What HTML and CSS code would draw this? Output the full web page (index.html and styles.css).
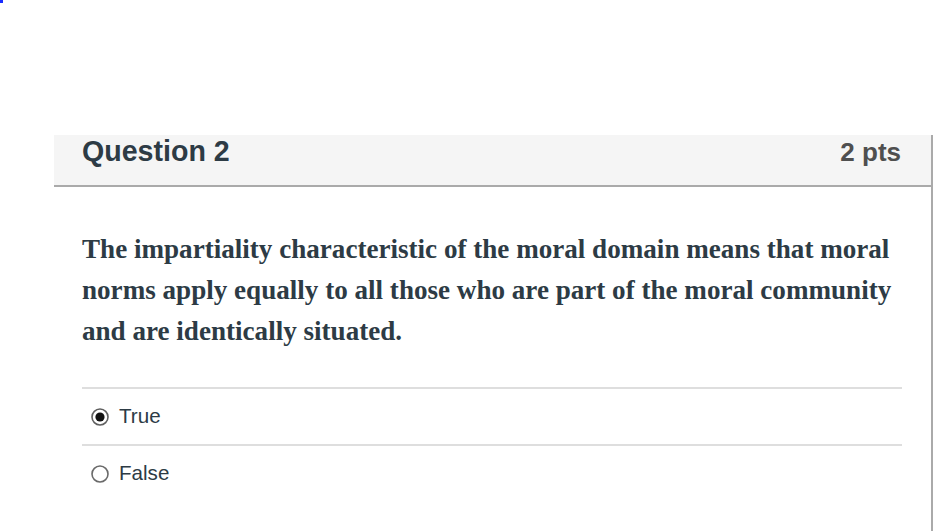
FILE: index.html
```html
<!DOCTYPE html>
<html lang="en">
<head>
<meta charset="utf-8">
<title>Question 2</title>
<link rel="stylesheet" href="styles.css">
</head>
<body>
<span class="focus-dot"></span>
<div class="question">
  <div class="question-header">
    <span class="question-title">Question 2</span>
    <span class="question-points">2 pts</span>
  </div>
  <div class="question-body">
    <p class="question-text">The impartiality characteristic of the moral domain means that moral norms apply equally to all those who are part of the moral community and are identically situated.</p>
    <div class="answers">
      <label class="answer">
        <svg class="radio" width="18" height="18" viewBox="0 0 18 18"><circle cx="9" cy="9" r="8" fill="#fff" stroke="#5f5f5f" stroke-width="1.6"/><circle cx="9" cy="9" r="4.6" fill="#111"/></svg>
        <span class="answer-text">True</span>
      </label>
      <label class="answer">
        <svg class="radio" width="18" height="18" viewBox="0 0 18 18"><circle cx="9" cy="9" r="8" fill="#fff" stroke="#6a6a6a" stroke-width="1.6"/></svg>
        <span class="answer-text">False</span>
      </label>
    </div>
  </div>
</div>
</body>
</html>
```

FILE: styles.css
```css
html, body {
  margin: 0;
  padding: 0;
  background: #fff;
}
body {
  font-family: "Liberation Sans", Arial, sans-serif;
  color: #2d3b45;
}
.focus-dot {
  position: absolute;
  left: 0;
  top: 0;
  width: 3px;
  height: 3px;
  background: #1a2cff;
}
.question {
  margin: 135px 0 0 54px;
  width: 877px;
  min-height: 396px;
  border-right: 2px solid #aaaaaa;
}
.question-header {
  display: flex;
  justify-content: space-between;
  align-items: baseline;
  background: #f5f5f5;
  padding: 0 30px 17px 28px;
  border-bottom: 2px solid #aaaaaa;
  line-height: 32px;
}
.question-title {
  font-size: 28.6px;
  font-weight: bold;
  color: #2d3b45;
}
.question-points {
  font-size: 26px;
  font-weight: bold;
  color: #4f4f4f;
}
.question-body {
  padding: 42px 29px 0 28px;
}
.question-text {
  margin: 0;
  font-family: "Liberation Serif", "Times New Roman", serif;
  font-weight: bold;
  font-size: 27.1px;
  line-height: 41px;
  color: #2d3b45;
}
.answers {
  margin-top: 35px;
}
.answer {
  display: flex;
  align-items: center;
  height: 55px;
  border-top: 2px solid #dedede;
  padding-left: 9px;
  gap: 10px;
  font-size: 20.6px;
  color: #2d3b45;
}
.radio {
  display: block;
  flex: none;
}
.answer-text {
  line-height: 24px;
  margin-top: -2px;
}
```
